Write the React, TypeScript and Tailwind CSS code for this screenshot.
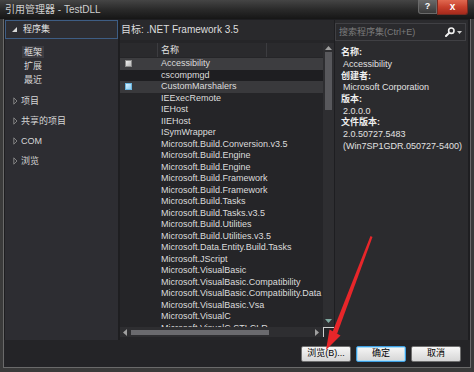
import React from "react";

const rows = [
  "Accessibility",
  "cscompmgd",
  "CustomMarshalers",
  "IEExecRemote",
  "IEHost",
  "IIEHost",
  "ISymWrapper",
  "Microsoft.Build.Conversion.v3.5",
  "Microsoft.Build.Engine",
  "Microsoft.Build.Engine",
  "Microsoft.Build.Framework",
  "Microsoft.Build.Framework",
  "Microsoft.Build.Tasks",
  "Microsoft.Build.Tasks.v3.5",
  "Microsoft.Build.Utilities",
  "Microsoft.Build.Utilities.v3.5",
  "Microsoft.Data.Entity.Build.Tasks",
  "Microsoft.JScript",
  "Microsoft.VisualBasic",
  "Microsoft.VisualBasic.Compatibility",
  "Microsoft.VisualBasic.Compatibility.Data",
  "Microsoft.VisualBasic.Vsa",
  "Microsoft.VisualC",
  "Microsoft.VisualC.STLCLR",
];

const Collapsed = () => (
  <svg width="5" height="8" viewBox="0 0 5 8" className="shrink-0">
    <path d="M0.8 0.8 L4 4 L0.8 7.2 Z" fill="none" stroke="#8a8a8a" strokeWidth="0.9" />
  </svg>
);

const TreeItem = ({ label }: { label: string }) => (
  <div className="h-[20px] flex items-center pl-[8px] gap-[3px]">
    <Collapsed />
    <span className="text-[#d6d6d6]">{label}</span>
  </div>
);

const Btn = ({ label, primary }: { label: string; primary?: boolean }) => (
  <div
    className={
      "w-[50px] h-[16px] flex items-center justify-center rounded-[2px] text-[9px] text-black bg-gradient-to-b from-[#f6f6f6] to-[#d6d6d6] " +
      (primary
        ? "border border-[#3d9de0] shadow-[inset_0_0_0_1px_#a8dcf7]"
        : "border border-[#6e6e6e]")
    }
  >
    {label}
  </div>
);

export default function App() {
  return (
    <div
      className="relative w-[474px] h-[372px] overflow-hidden bg-[#3a3a3a] text-[9px] leading-none"
      style={{ fontFamily: '"Liberation Sans", "Noto Sans CJK SC", sans-serif' }}
    >
      {/* title bar */}
      <div className="h-[19px] flex justify-between bg-gradient-to-b from-[#454545] via-[#2a2a2a] to-[#161616]">
        <div className="pl-[5px] pt-[5px] text-[10px] text-[#cfcfcf]">引用管理器 - TestDLL</div>
        <div className="flex pr-[6px] items-start">
          <div className="w-[19px] h-[14px] flex items-center justify-center rounded-bl-[3px] border border-t-0 border-[#6a6a6a] bg-gradient-to-b from-[#6a6a6a] to-[#3a3a3a] text-white text-[9px] font-bold">
            ?
          </div>
          <div className="w-[31px] h-[15px] flex items-center justify-center rounded-br-[3px] border border-t-0 border-[#7a2a20] bg-gradient-to-b from-[#e06850] via-[#c8402c] to-[#a52a1c] text-white text-[10px] font-bold">
            x
          </div>
        </div>
      </div>

      {/* window frame */}
      <div className="ml-[3px] w-[468px] h-[349px] bg-[#1e1e21] border-l border-r border-b border-[#6a6a6a] flex flex-col">
        <div className="mt-[1px] h-[320px] flex pl-[1px]">
          {/* left tree */}
          <div className="w-[113px] h-full bg-[#2d2d32] flex flex-col">
            <div className="h-[19px] border border-[#3e5d84] flex items-center pl-[6px] gap-[6px]">
              <svg width="5" height="5" viewBox="0 0 5 5" className="shrink-0">
                <path d="M0 5 L5 5 L5 0 Z" fill="#d8d8d8" />
              </svg>
              <span className="text-[#e4e4e4]">程序集</span>
            </div>
            <div className="flex flex-col pl-[17px] pt-[6px]">
              <div className="h-[14px] flex items-center">
                <span className="px-[2px] h-[12px] flex items-center bg-[#3c3c42] text-[#e0e0e0]">框架</span>
              </div>
              <div className="h-[14px] flex items-center pl-[2px] text-[#d6d6d6]">扩展</div>
              <div className="h-[14px] flex items-center pl-[2px] text-[#d6d6d6]">最近</div>
            </div>
            <div className="mt-[4px] flex flex-col">
              <TreeItem label="项目" />
              <TreeItem label="共享的项目" />
              <TreeItem label="COM" />
              <TreeItem label="浏览" />
            </div>
          </div>

          {/* middle */}
          <div className="ml-[2px] w-[214px] h-full bg-[#252528] flex flex-col">
            <div className="h-[20px] flex items-center pl-[1px] bg-[#29292c] text-[10px] text-[#dedede]">
              目标: .NET Framework 3.5
            </div>
            <div className="h-[3px]" />
            <div className="flex h-[284px]">
              <div className="w-[203px] flex flex-col overflow-hidden">
                <div className="h-[14px] shrink-0 flex bg-[#2a2a2d]">
                  <div className="w-[38px] border-r border-[#3c3c40]" />
                  <div className="w-[109px] border-r border-[#3c3c40] flex items-center pl-[3px] text-[#e0e0e0]">名称</div>
                </div>
                <div className="h-[1px] shrink-0" />
                {rows.map((r, i) => (
                  <div
                    key={i}
                    className={
                      "h-[11.5px] shrink-0 flex items-center " +
                      (i === 0 ? "bg-[#3d3d40]" : i === 1 ? "bg-[#1e1e21]" : i === 2 ? "bg-[#39393c]" : "")
                    }
                  >
                    <div className="w-[38px] pl-[5px] flex items-center">
                      {i === 0 && (
                        <div className="w-[7px] h-[7px] border border-[#8a8a8a] bg-gradient-to-br from-[#f0f0f0] to-[#b8b8b8]" />
                      )}
                      {i === 2 && (
                        <div className="w-[7px] h-[7px] border border-[#6ab4de] bg-gradient-to-br from-[#d8f2ff] to-[#8ccbf0]" />
                      )}
                    </div>
                    <span className="pl-[3px] whitespace-nowrap text-[#dcdcdc]">{r}</span>
                  </div>
                ))}
              </div>
              {/* vertical scrollbar */}
              <div className="w-[11px] bg-[#2e2e31] flex flex-col items-center">
                <svg width="7" height="4" viewBox="0 0 7 4" className="mt-[3px]">
                  <path d="M0 4 L3.5 0 L7 4 Z" fill="#a0a0a0" />
                </svg>
                <div className="mt-[2px] w-[7px] h-[58px] bg-[#58585c]" />
                <div className="flex-1" />
                <svg width="7" height="4" viewBox="0 0 7 4" className="mb-[4px]">
                  <path d="M0 0 L7 0 L3.5 4 Z" fill="#7fa8a0" />
                </svg>
              </div>
            </div>
            {/* horizontal scrollbar */}
            <div className="h-[10px] flex">
              <div className="w-[203px] bg-[#2e2e31] flex items-center pl-[3px]">
                <svg width="4" height="7" viewBox="0 0 4 7">
                  <path d="M4 0 L0 3.5 L4 7 Z" fill="#a0a0a0" />
                </svg>
                <div className="ml-[4px] w-[138px] h-[5px] bg-[#6a6a6e]" />
                <div className="flex-1" />
                <svg width="4" height="7" viewBox="0 0 4 7" className="mr-[4px]">
                  <path d="M0 0 L4 3.5 L0 7 Z" fill="#a0a0a0" />
                </svg>
              </div>
              <div className="w-[11px] border-l border-t border-[#cfcfcf] bg-[#252528]" />
            </div>
          </div>

          {/* right details */}
          <div className="ml-[1px] w-[133px] h-full bg-[#2b2b2e] flex flex-col">
            <div className="mt-[3px] w-[131px] h-[18px] border border-[#404044] bg-[#2a2a2d] flex items-center pl-[3px] pr-[3px]">
              <span className="text-[#7c7c7c]">搜索程序集(Ctrl+E)</span>
              <div className="flex-1" />
              <svg width="10" height="10" viewBox="0 0 10 10">
                <circle cx="6.3" cy="3.7" r="2.7" fill="none" stroke="#f0f0f0" strokeWidth="1.6" />
                <path d="M4.3 5.7 L1 9" stroke="#f0f0f0" strokeWidth="2" strokeLinecap="round" />
              </svg>
              <svg width="5" height="3" viewBox="0 0 5 3" className="ml-[2px]">
                <path d="M0 0 L5 0 L2.5 3 Z" fill="#d0d0d0" />
              </svg>
            </div>
            <div className="pl-[6px] pt-[6px] flex flex-col text-[#e2e2e2]">
              <div className="h-[11.7px] flex items-center font-bold text-[#f0f0f0]">名称:</div>
              <div className="h-[11.7px] flex items-center pl-[2px]">Accessibility</div>
              <div className="h-[11.7px] flex items-center font-bold text-[#f0f0f0]">创建者:</div>
              <div className="h-[11.7px] flex items-center pl-[2px]">Microsoft Corporation</div>
              <div className="h-[11.7px] flex items-center font-bold text-[#f0f0f0]">版本:</div>
              <div className="h-[11.7px] flex items-center pl-[2px]">2.0.0.0</div>
              <div className="h-[11.7px] flex items-center font-bold text-[#f0f0f0]">文件版本:</div>
              <div className="h-[11.7px] flex items-center pl-[2px]">2.0.50727.5483</div>
              <div className="h-[11.7px] flex items-center pl-[2px]">(Win7SP1GDR.050727-5400)</div>
            </div>
          </div>
        </div>

        {/* footer */}
        <div className="flex-1 bg-[#242427] flex items-center justify-end gap-[5px] pr-[9px]">
          <Btn label="浏览(B)..." />
          <Btn label="确定" primary />
          <Btn label="取消" />
        </div>
      </div>

      {/* red annotation arrow */}
      <svg className="absolute left-0 top-0 pointer-events-none" width="474" height="372" viewBox="0 0 474 372">
        <path d="M370.5 236 L372.5 237 L337 334 L332.5 332 Z" fill="#e8262a" />
        <path d="M326 350 L329.5 329.5 L340.5 335.5 Z" fill="#e8262a" />
      </svg>
    </div>
  );
}
